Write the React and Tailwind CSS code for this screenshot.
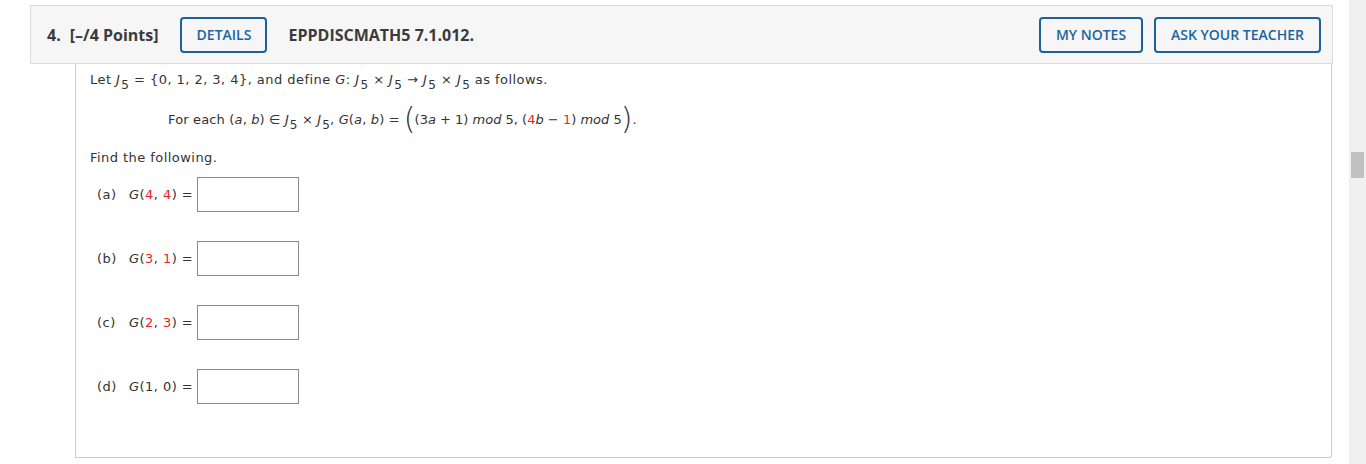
import React from 'react';

const mathFont = { fontFamily: '"DejaVu Sans", Verdana, sans-serif' };

const J5 = () => (
  <span>
    <i>J</i>
    <sub className="relative top-[5px] bottom-auto align-baseline text-[12px] ml-[1px]">5</sub>
  </span>
);

const Red = ({ children }) => <span className="text-[#f01e1e]">{children}</span>;

const Part = ({ label, a, b, redA, redB }) => (
  <div className="flex items-center h-[35px]">
    <span className="w-[39px] pl-[7px]">({label})</span>
    <span>
      <i>G</i>(
      {redA ? <Red>{a}</Red> : a}, {redB ? <Red>{b}</Red> : b}) =
    </span>
    <div className="ml-[4px] w-[102px] h-[35px] border border-[#8a8a8a] bg-white" />
  </div>
);

const HeaderButton = ({ children, className = '' }) => (
  <button
    className={`h-[36px] rounded-[4px] border-2 border-[#1e6198] text-[14px] font-semibold text-[#1c64a0] ${className}`}
  >
    {children}
  </button>
);

export default function App() {
  return (
    <div className="flex h-[464px] w-[1366px] bg-white overflow-hidden" style={{ fontFamily: '"Open Sans", sans-serif' }}>
      <div className="flex-1 pl-[30px] pt-[5px]">
        {/* Question header */}
        <div className="mr-[16px] flex h-[59px] items-center border border-[#dcdcdc] bg-[#f6f6f6] pl-[16px] pr-[11px]">
          <span className="text-[16px] font-bold text-[#3b3b3b]">4.</span>
          <span className="ml-[9px] text-[16px] font-bold text-[#3b3b3b]">[–/4 Points]</span>
          <HeaderButton className="ml-[22px] w-[87px]">DETAILS</HeaderButton>
          <span className="ml-[21px] text-[16px] font-bold text-[#3b3b3b]">EPPDISCMATH5 7.1.012.</span>
          <div className="ml-auto flex gap-[11px]">
            <HeaderButton className="w-[104px]">MY NOTES</HeaderButton>
            <HeaderButton className="w-[167px]">ASK YOUR TEACHER</HeaderButton>
          </div>
        </div>

        {/* Question body */}
        <div
          className="ml-[45px] mr-[17px] h-[394px] rounded-br-[3px] border-x border-b border-[#cdcdcd] pl-[14px] pt-[4px] text-[13px] tracking-[0.45px] text-[#333]"
          style={mathFont}
        >
          <div className="h-[24px] leading-[24px]">
            Let <J5 /> = {'{'}0, 1, 2, 3, 4{'}'}, and define <i>G</i>: <J5 /> × <J5 /> → <J5 /> × <J5 /> as follows.
          </div>
          <div className="mt-[13px] flex h-[30px] items-center pl-[78px] tracking-[0.15px]">
            <span>
              For each (<i>a</i>, <i>b</i>) ∈ <J5 /> × <J5 />, <i>G</i>(<i>a</i>, <i>b</i>) =
            </span>
            <span className="ml-[4px] mr-[-1px] text-[30px] leading-[30px] font-extralight relative top-[-1px]">(</span>
            <span className="tracking-normal">
              (3<i>a</i> + 1) <i>mod</i> 5, (<Red>4</Red><i>b</i> − <Red>1</Red>) <i>mod</i> 5
            </span>
            <span className="ml-[-1px] text-[30px] leading-[30px] font-extralight relative top-[-1px]">)</span>
            <span>.</span>
          </div>
          <div className="mt-[11px] h-[24px] leading-[24px]">Find the following.</div>
          <div className="mt-[7px] flex flex-col gap-[29px]">
            <Part label="a" a="4" b="4" redA redB />
            <Part label="b" a="3" b="1" redA redB />
            <Part label="c" a="2" b="3" redA redB />
            <Part label="d" a="1" b="0" />
          </div>
        </div>
      </div>

      {/* Scrollbar */}
      <div className="w-[17px] bg-[#f0f0f0] pl-[2px] pt-[152px]">
        <div className="h-[26px] w-[13px] bg-[#c1c1c1]" />
      </div>
    </div>
  );
}
